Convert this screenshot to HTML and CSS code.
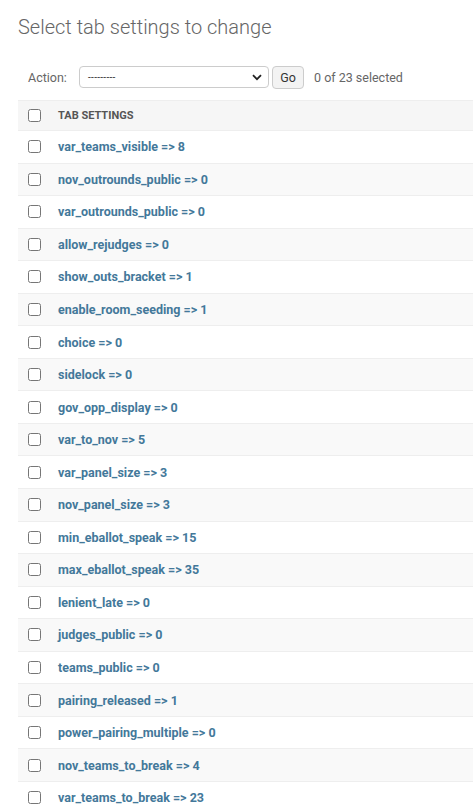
FILE: index.html
```html
<!DOCTYPE html>
<html>
<head>
<meta charset="utf-8">
<link rel="stylesheet" href="styles.css">
</head>
<body>
<div class="content">
  <h1 class="title">Select tab settings to change</h1>
  <div class="actions">
    <label class="action-label">Action:</label>
    <div class="select">
      <span class="select-text">---------</span>
      <svg class="chev" width="10" height="7" viewBox="0 0 10 7"><path d="M1 1.2 L5 5.2 L9 1.2" fill="none" stroke="#222" stroke-width="1.8"/></svg>
    </div>
    <button class="go">Go</button>
    <span class="counter">0 of 23 selected</span>
  </div>
  <table class="results">
    <thead>
      <tr><th class="cb"><input type="checkbox"></th><th class="col">TAB SETTINGS</th></tr>
    </thead>
    <tbody>
      <tr><td class="cb"><input type="checkbox"></td><td><a>var_teams_visible =&gt; 8</a></td></tr>
      <tr><td class="cb"><input type="checkbox"></td><td><a>nov_outrounds_public =&gt; 0</a></td></tr>
      <tr><td class="cb"><input type="checkbox"></td><td><a>var_outrounds_public =&gt; 0</a></td></tr>
      <tr><td class="cb"><input type="checkbox"></td><td><a>allow_rejudges =&gt; 0</a></td></tr>
      <tr><td class="cb"><input type="checkbox"></td><td><a>show_outs_bracket =&gt; 1</a></td></tr>
      <tr><td class="cb"><input type="checkbox"></td><td><a>enable_room_seeding =&gt; 1</a></td></tr>
      <tr><td class="cb"><input type="checkbox"></td><td><a>choice =&gt; 0</a></td></tr>
      <tr><td class="cb"><input type="checkbox"></td><td><a>sidelock =&gt; 0</a></td></tr>
      <tr><td class="cb"><input type="checkbox"></td><td><a>gov_opp_display =&gt; 0</a></td></tr>
      <tr><td class="cb"><input type="checkbox"></td><td><a>var_to_nov =&gt; 5</a></td></tr>
      <tr><td class="cb"><input type="checkbox"></td><td><a>var_panel_size =&gt; 3</a></td></tr>
      <tr><td class="cb"><input type="checkbox"></td><td><a>nov_panel_size =&gt; 3</a></td></tr>
      <tr><td class="cb"><input type="checkbox"></td><td><a>min_eballot_speak =&gt; 15</a></td></tr>
      <tr><td class="cb"><input type="checkbox"></td><td><a>max_eballot_speak =&gt; 35</a></td></tr>
      <tr><td class="cb"><input type="checkbox"></td><td><a>lenient_late =&gt; 0</a></td></tr>
      <tr><td class="cb"><input type="checkbox"></td><td><a>judges_public =&gt; 0</a></td></tr>
      <tr><td class="cb"><input type="checkbox"></td><td><a>teams_public =&gt; 0</a></td></tr>
      <tr><td class="cb"><input type="checkbox"></td><td><a>pairing_released =&gt; 1</a></td></tr>
      <tr><td class="cb"><input type="checkbox"></td><td><a>power_pairing_multiple =&gt; 0</a></td></tr>
      <tr><td class="cb"><input type="checkbox"></td><td><a>nov_teams_to_break =&gt; 4</a></td></tr>
      <tr><td class="cb"><input type="checkbox"></td><td><a>var_teams_to_break =&gt; 23</a></td></tr>
    </tbody>
  </table>
</div>
</body>
</html>
```
FILE: styles.css
```css
html, body {
  margin: 0;
  padding: 0;
  background: #fff;
}
body {
  font-family: Roboto, "Liberation Sans", sans-serif;
  color: #333;
  overflow: hidden;
}
.content {
  padding: 0 1px 0 18px;
}
.title {
  margin: 0;
  padding-top: 14px;
  height: 28px;
  font-size: 20px;
  line-height: 26px;
  font-weight: 300;
  color: #666;
}
.actions {
  display: flex;
  align-items: center;
  height: 22px;
  margin-top: 24px;
  margin-bottom: 12px;
  padding-left: 10px;
  font-size: 12.5px;
  color: #666;
}
.action-label {
  width: 51px;
}
.select {
  box-sizing: border-box;
  width: 190px;
  height: 22px;
  border: 1px solid #ccc;
  border-radius: 4px;
  display: flex;
  align-items: center;
  justify-content: space-between;
  padding: 0 6px 0 8px;
  background: #fff;
}
.select-text {
  font-size: 10px;
  color: #333;
  letter-spacing: 0.3px;
}
.chev {
  display: block;
}
.go {
  box-sizing: border-box;
  margin-left: 3px;
  width: 32px;
  height: 23px;
  border: 1px solid #ccc;
  border-radius: 4px;
  background: #f3f3f3;
  font-family: Roboto, "Liberation Sans", sans-serif;
  font-size: 12.5px;
  color: #333;
  padding: 0;
}
.counter {
  margin-left: 10px;
  color: #666;
}
.results {
  width: 100%;
  border-collapse: collapse;
  border-top: 1px solid #eee;
}
.results th {
  background: #f6f6f6;
  height: 29px;
  padding: 0;
  text-align: left;
  font-size: 11px;
  font-weight: 700;
  color: #555;
  border-bottom: 1px solid #eee;
}
.results td {
  height: 31.55px;
  padding: 0;
  border-bottom: 1px solid #eee;
  font-size: 12.5px;
  font-weight: 700;
}
.results tbody tr:nth-child(even) td {
  background: #f9f9f9;
}
.results .cb {
  width: 40px;
  padding-left: 10px;
  box-sizing: border-box;
}
.results input[type="checkbox"] {
  margin: 0;
  width: 13px;
  height: 13px;
  display: block;
}
.results th.col {
  padding-left: 0;
}
.results a {
  color: #43789a;
  text-decoration: none;
}
```
